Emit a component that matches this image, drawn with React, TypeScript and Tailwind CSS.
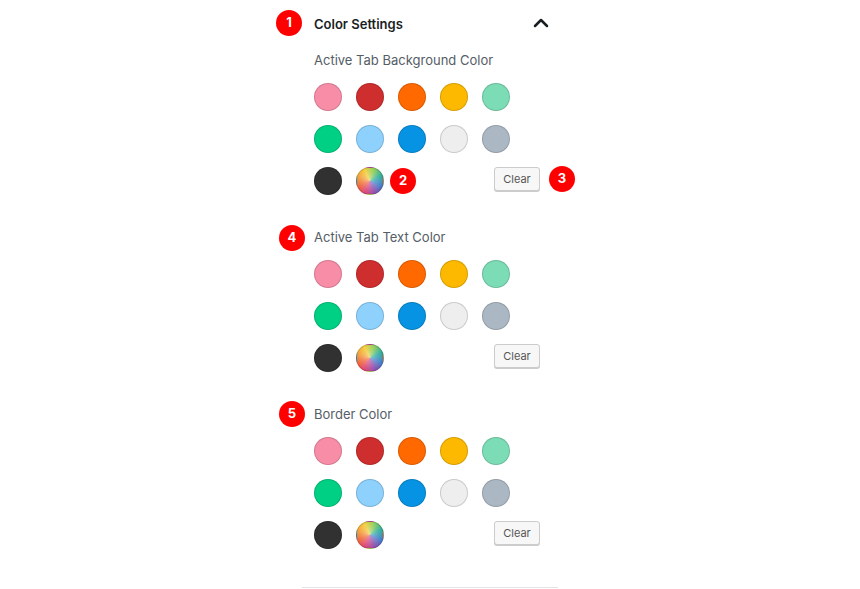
import { ChevronUp } from 'lucide-react';

type Swatch = { name: string; className: string };

const palette: Swatch[] = [
  { name: 'Pale pink', className: 'bg-[#f78da7]' },
  { name: 'Vivid red', className: 'bg-[#cf2e2e]' },
  { name: 'Luminous vivid orange', className: 'bg-[#ff6900]' },
  { name: 'Luminous vivid amber', className: 'bg-[#fcb900]' },
  { name: 'Light green cyan', className: 'bg-[#7bdcb5]' },
  { name: 'Vivid green cyan', className: 'bg-[#00d084]' },
  { name: 'Pale cyan blue', className: 'bg-[#8ed1fc]' },
  { name: 'Vivid cyan blue', className: 'bg-[#0693e3]' },
  { name: 'Very light gray', className: 'bg-[#eeeeee]' },
  { name: 'Cyan bluish gray', className: 'bg-[#abb8c3]' },
];

function Dot({ className, label }: { className: string; label: string }) {
  return (
    <button
      type="button"
      aria-label={label}
      className={`w-[28px] h-[28px] rounded-full border border-black/15 shrink-0 ${className}`}
    />
  );
}

function Badge({ n, x, y }: { n: number; x: number; y: number }) {
  return (
    <span
      className="absolute w-[26px] h-[26px] -ml-[13px] -mt-[13px] rounded-full bg-[#ff0000] text-white text-[13px] font-bold flex items-center justify-center"
      style={{ left: x, top: y }}
    >
      {n}
    </span>
  );
}

function ColorSection({ title }: { title: string }) {
  return (
    <div>
      <p className="text-[13px] leading-[18px] text-[#555d66] mb-[14px]">{title}</p>
      <div className="w-[226px] flex flex-col gap-[14px]">
        <div className="flex gap-[14px]">
          {palette.slice(0, 5).map((c) => (
            <Dot key={c.name} className={c.className} label={c.name} />
          ))}
        </div>
        <div className="flex gap-[14px]">
          {palette.slice(5).map((c) => (
            <Dot key={c.name} className={c.className} label={c.name} />
          ))}
        </div>
        <div className="flex items-start justify-between">
          <div className="flex gap-[14px]">
            <Dot className="bg-[#313131]" label="Very dark gray" />
            <Dot
              className="bg-[radial-gradient(circle,rgba(255,255,255,0.4),rgba(255,255,255,0)_70%),conic-gradient(from_20deg,#8fce5a,#2fae9e,#3d7fc9,#8a4fb0,#d9457e,#f0653a,#f5a03a,#f2cf3f,#8fce5a)]"
              label="Custom color"
            />
          </div>
          <button
            type="button"
            className="w-[46px] h-[24px] rounded-[3px] border border-[#cccccc] bg-[#f7f7f7] shadow-[0_1px_0_#cccccc] text-[11px] text-[#555555]"
          >
            Clear
          </button>
        </div>
      </div>
    </div>
  );
}

export default function App() {
  return (
    <div className="relative w-full h-[589px] bg-white overflow-hidden font-['Inter','Liberation_Sans',sans-serif]">
      <div className="mx-auto w-[256px] border-b border-[#e2e4e7] pb-[38px]">
        <button type="button" className="w-full h-[46px] pl-[12px] pr-[5px] flex items-center justify-between">
          <span className="mt-[3px] text-[13px] font-semibold text-[#191e23]">Color Settings</span>
          <ChevronUp size={24} strokeWidth={2.5} className="text-[#191e23]" />
        </button>
        <div className="pl-[12px] pt-[5px] flex flex-col gap-[33px]">
          <ColorSection title="Active Tab Background Color" />
          <ColorSection title="Active Tab Text Color" />
          <ColorSection title="Border Color" />
        </div>
      </div>

      <Badge n={1} x={289} y={23} />
      <Badge n={2} x={403} y={181} />
      <Badge n={3} x={562} y={179} />
      <Badge n={4} x={292} y={238} />
      <Badge n={5} x={292} y={414} />
    </div>
  );
}
